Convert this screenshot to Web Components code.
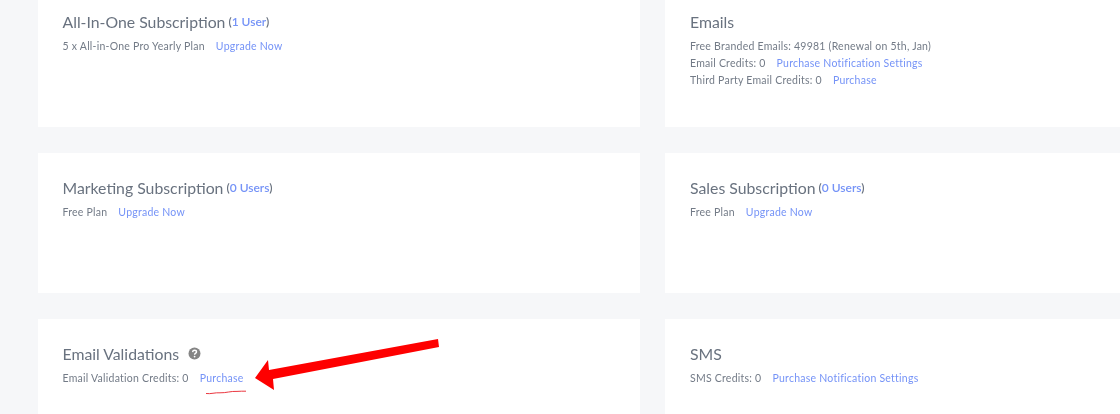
<!DOCTYPE html>
<html>
<head>
<meta charset="utf-8">
<style>
html, body { margin: 0; height: 414px; overflow: hidden; background: #f6f7f9; }
</style>
</head>
<body>
<billing-page>
    <info-card>
        <span slot="title">All-In-One Subscription</span>
        <span slot="note">(<b-link>1 User</b-link>)</span>
        <info-line>5 x All-in-One Pro Yearly Plan<b-link>Upgrade Now</b-link></info-line>
    </info-card>
    <info-card>
        <span slot="title">Emails</span>
        <info-line>Free Branded Emails: 49981 (Renewal on 5th, Jan)</info-line>
        <info-line>Email Credits: 0<b-link>Purchase Notification Settings</b-link></info-line>
        <info-line>Third Party Email Credits: 0<b-link>Purchase</b-link></info-line>
    </info-card>
    <info-card>
        <span slot="title">Marketing Subscription</span>
        <span slot="note">(<b-link>0 Users</b-link>)</span>
        <info-line>Free Plan<b-link>Upgrade Now</b-link></info-line>
    </info-card>
    <info-card>
        <span slot="title">Sales Subscription</span>
        <span slot="note">(<b-link>0 Users</b-link>)</span>
        <info-line>Free Plan<b-link>Upgrade Now</b-link></info-line>
    </info-card>
    <info-card>
        <span slot="title">Email Validations</span>
        <help-icon slot="note"></help-icon>
        <info-line>Email Validation Credits: 0<b-link>Purchase</b-link></info-line>
    </info-card>
    <info-card>
        <span slot="title">SMS</span>
        <info-line>SMS Credits: 0<b-link>Purchase Notification Settings</b-link></info-line>
    </info-card>
</billing-page>
<script>
class BillingPage extends HTMLElement{
    constructor(){
        super();
        this.attachShadow({mode:"open"});
        this.shadowRoot.innerHTML=`
            <style>
                :host{
                    display:block;
                    position:relative;
                    height:414px;
                    overflow:hidden;
                    font-family:"Lato","Noto Sans",sans-serif;
                }
                .grid{
                    display:grid;
                    grid-template-columns:602.5px 1fr;
                    grid-auto-rows:140px;
                    gap:26px 25px;
                    margin-top:-13px;
                    padding-left:37.5px;
                    filter:blur(.35px);
                }
                svg{position:absolute;left:0;top:0;}
            </style>
            <div class="grid"><slot></slot></div>
            <svg width="1120" height="414" viewBox="0 0 1120 414">
                <polygon fill="#fe0000" points="438,339 439,347 273,379 274,390 255,378 268,360 269,370"/>
                <path d="M206 393.5 C211 394.2 215 392.4 220 392.8 C226 393 231 391 237 391.4 C240 391.2 243 391.1 246 391.2" fill="none" stroke="#e8202a" stroke-width="0.9"/>
            </svg>
        `;
    }
}
class InfoCard extends HTMLElement{
    constructor(){
        super();
        this.attachShadow({mode:"open"});
        this.shadowRoot.innerHTML=`
            <style>
                :host{
                    display:block;
                    background:#fff;
                    padding:24px 24px 0 25px;
                    box-sizing:border-box;
                }
                .head{
                    display:flex;
                    align-items:center;
                    gap:3px;
                    height:20px;
                    margin-bottom:6.5px;
                    font-size:15.8px;
                    color:#69727f;
                }
                .note{font-size:12px;font-weight:600;color:#69727f;display:flex;align-items:center;padding-top:1px;}
            </style>
            <div class="head"><slot name="title"></slot><span class="note"><slot name="note"></slot></span></div>
            <slot></slot>
        `;
    }
}
class InfoLine extends HTMLElement{
    constructor(){
        super();
        this.attachShadow({mode:"open"});
        this.shadowRoot.innerHTML=`<style>
                :host{
                    display:block;
                    height:17px;
                    line-height:17px;
                    font-size:10.5px;
                    letter-spacing:.24px;
                    color:#737b87;
                    white-space:nowrap;
                }
            </style><slot></slot>`;
    }
}
class BLink extends HTMLElement{
    constructor(){
        super();
        this.attachShadow({mode:"open"});
        // no whitespace round the slot: the host is inline, it would show as a space
        this.shadowRoot.innerHTML=`<style>
                :host{display:inline;color:#7593f7;}
                :host-context(info-line){margin-left:11px;}
            </style><slot></slot>`;
    }
}
class HelpIcon extends HTMLElement{
    constructor(){
        super();
        this.attachShadow({mode:"open"});
        this.shadowRoot.innerHTML=`
            <style>
                :host{display:inline-flex;margin-left:6px;}
            </style>
            <svg width="13" height="13" viewBox="0 0 13 13">
                <circle cx="6.5" cy="6.5" r="6" fill="#858585"/>
                <path d="M4.6 5.1 C4.7 3.9 5.5 3.3 6.6 3.3 C7.7 3.3 8.5 4 8.5 4.9 C8.5 6.2 6.6 6.2 6.6 7.7" fill="none" stroke="#fff" stroke-width="1.4"/>
                <circle cx="6.6" cy="9.6" r="0.9" fill="#fff"/>
            </svg>
        `;
    }
}
customElements.define('billing-page', BillingPage);
customElements.define('info-card', InfoCard);
customElements.define('info-line', InfoLine);
customElements.define('b-link', BLink);
customElements.define('help-icon', HelpIcon);
</script>
</body>
</html>
